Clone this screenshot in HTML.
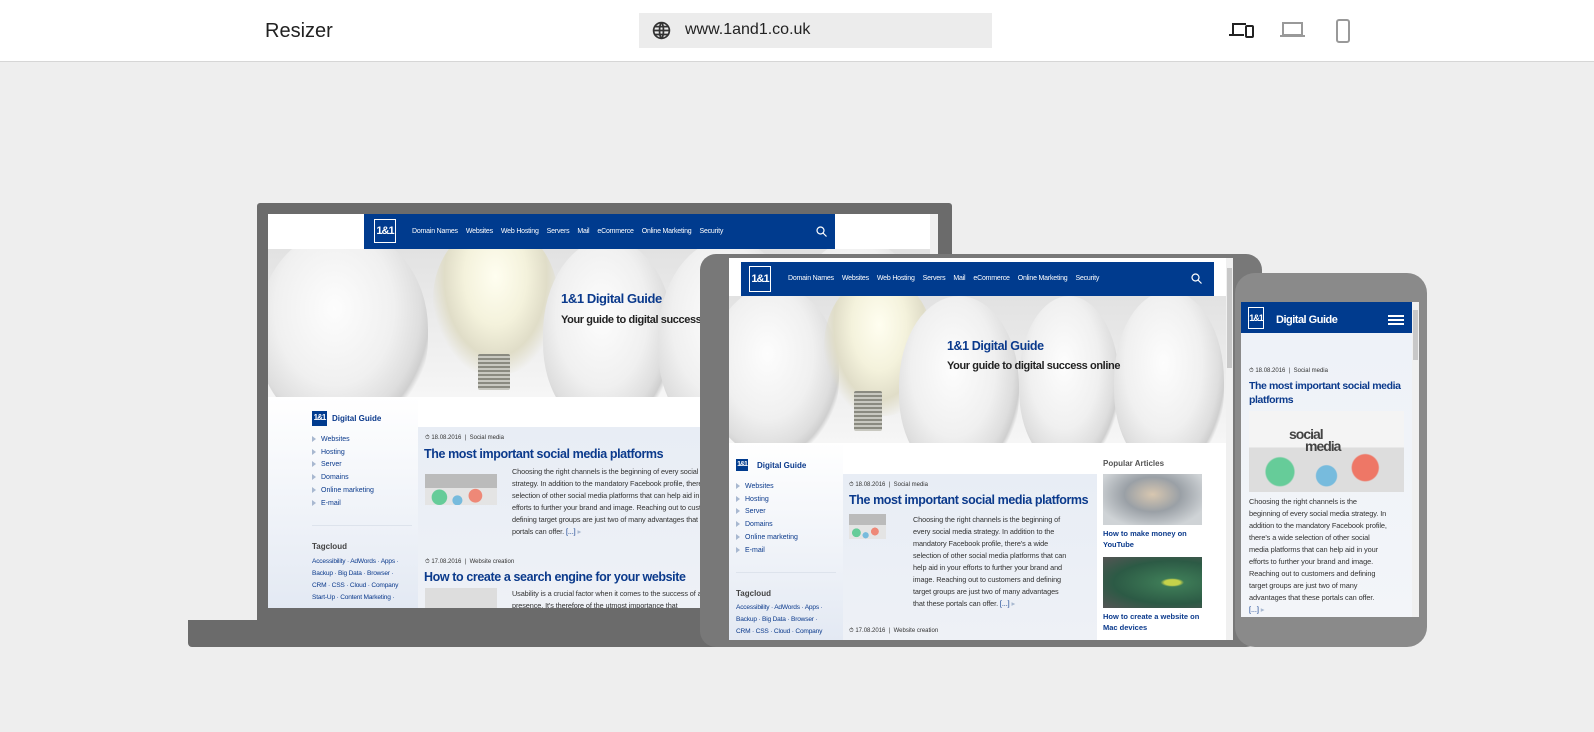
<!DOCTYPE html>
<html><head><meta charset="utf-8">
<style>
*{margin:0;padding:0;box-sizing:border-box}
body{width:1594px;height:732px;background:#eeeeee;font-family:"Liberation Sans",sans-serif;position:relative;overflow:hidden}
.a{position:absolute}
.top{left:0;top:0;width:1594px;height:62px;background:#fff;border-bottom:1px solid #d6d6d6}
.blue{background:#003b8e}
.logo{border:1px solid #fff;color:#fff;font-weight:bold;text-align:center;font-family:"Liberation Sans",sans-serif;letter-spacing:-1px}
.nav{color:#fff;font-size:7px;white-space:nowrap;letter-spacing:-0.2px}
.nav span{margin-right:8px}
.hero{background:linear-gradient(180deg,#e2e2e2 0%,#eeeeee 60%,#f6f6f6 100%);overflow:hidden}
.bulb{position:absolute;border-radius:50% 50% 45% 45%;background:radial-gradient(ellipse at 45% 40%,#fdfdfd 0%,#f0f0f0 45%,#dedede 65%,#cfcfcf 72%,rgba(230,230,230,0) 76%)}
.bulb.lit{background:radial-gradient(ellipse at 50% 35%,#fffef0 0%,#f4f2dc 35%,#e0ddc8 58%,rgba(225,225,225,0) 74%)}
.base{position:absolute;background:repeating-linear-gradient(180deg,#8a8a80 0 2px,#c8c8c0 2px 4px);border-radius:2px}
.h1{color:#0b3a8c;font-weight:bold;white-space:nowrap;letter-spacing:-0.4px}
.sub{color:#222;font-weight:bold;white-space:nowrap;letter-spacing:-0.4px}
.side{background:linear-gradient(180deg,#fff 0%,#e3e9f3 100%)}
.li{font-size:7px;color:#0b3a8c;white-space:nowrap}
.li:before{content:"";display:inline-block;border-left:4px solid #a8b8d0;border-top:3px solid transparent;border-bottom:3px solid transparent;margin-right:5px;vertical-align:-1px}
.meta{font-size:6px;color:#333;white-space:nowrap}
.txt{font-size:7.3px;color:#333;line-height:12px;letter-spacing:-0.1px}
.tag{font-size:6.6px;color:#0b3a8c;line-height:12px;white-space:nowrap;letter-spacing:-0.2px}
.thumb{background:radial-gradient(circle at 20% 75%,#6c9 0 12%,transparent 13%),radial-gradient(circle at 70% 70%,#e87 0 12%,transparent 13%),radial-gradient(circle at 45% 85%,#7bd 0 10%,transparent 11%),linear-gradient(180deg,#bbb 0 45%,#e4e4e4 45%)}
.mini{font-size:8px;color:#0b3a8c;font-weight:bold}
</style></head><body>
<div class="a top"></div>
<div class="a" style="left:265px;top:20px;font-size:20px;color:#222">Resizer</div>
<div class="a" style="left:639px;top:13px;width:353px;height:35px;background:#ececec"></div>
<svg class="a" style="left:651px;top:20px" width="21" height="21" viewBox="0 0 24 24" fill="none" stroke="#333" stroke-width="2"><circle cx="12" cy="12" r="9"/><path d="M3 12h18M12 3c-3 3-3 15 0 18M12 3c3 3 3 15 0 18M4.5 7.5h15M4.5 16.5h15"/></svg>
<div class="a" style="left:685px;top:21px;font-size:16px;color:#222">www.1and1.co.uk</div>
<svg class="a" style="left:1229px;top:20px" width="26" height="20" viewBox="0 0 26 20"><path d="M3 3h14v2H5v9h10v2H0v-2h3z" fill="#222"/><rect x="17" y="6" width="7" height="11" rx="1" fill="none" stroke="#222" stroke-width="2"/></svg>
<svg class="a" style="left:1280px;top:20px" width="25" height="20" viewBox="0 0 25 20"><rect x="3" y="3" width="19" height="12" fill="none" stroke="#999" stroke-width="2"/><rect x="0" y="15" width="25" height="2" fill="#999"/></svg>
<svg class="a" style="left:1335px;top:19px" width="16" height="24" viewBox="0 0 16 24"><rect x="2" y="1" width="12" height="22" rx="2" fill="none" stroke="#999" stroke-width="2"/></svg>

<!-- LAPTOP -->
<div class="a" style="left:257px;top:203px;width:695px;height:419px;background:#6b6b6b;border-radius:3px 3px 0 0"></div>
<div class="a" style="left:188px;top:620px;width:764px;height:27px;background:#6b6b6b;border-radius:0 0 4px 4px"></div>
<div class="a" style="left:268px;top:214px;width:670px;height:394px;background:#fff;overflow:hidden">
  <div class="a" style="left:662px;top:0;width:8px;height:394px;background:#f0f0f0"></div>
  <div class="a hero" style="left:0;top:35px;width:662px;height:148px">
    <div class="bulb" style="left:-10px;top:-20px;width:170px;height:200px"></div>
    <div class="bulb lit" style="left:165px;top:-25px;width:125px;height:150px"></div>
    <div class="base" style="left:210px;top:105px;width:32px;height:36px"></div>
    <div class="bulb" style="left:275px;top:-10px;width:130px;height:190px"></div>
    <div class="bulb" style="left:390px;top:-10px;width:140px;height:200px"></div>
    <div class="bulb" style="left:520px;top:-10px;width:140px;height:200px"></div>
  </div>
  <div class="a blue" style="left:96px;top:0;width:471px;height:35px"></div>
  <div class="a logo" style="left:106px;top:5px;width:22px;height:24px;font-size:11px;line-height:22px">1&amp;1</div>
  <div class="a nav" style="left:144px;top:14px"><span>Domain Names</span><span>Websites</span><span>Web Hosting</span><span>Servers</span><span>Mail</span><span>eCommerce</span><span>Online Marketing</span><span>Security</span></div>
  <svg class="a" style="left:548px;top:12px" width="11" height="11" viewBox="0 0 11 11" fill="none" stroke="#fff" stroke-width="1.2"><circle cx="4.5" cy="4.5" r="3.5"/><path d="M7 7l3.5 3.5"/></svg>
  <div class="a h1" style="left:293px;top:77px;font-size:13px">1&amp;1 Digital Guide</div>
  <div class="a sub" style="left:293px;top:100px;font-size:11px">Your guide to digital success online</div>
  <div class="a side" style="left:0;top:183px;width:150px;height:211px"></div>
  <div class="a blue logo" style="left:44px;top:197px;width:15px;height:15px;font-size:8px;line-height:14px;border:none">1&amp;1</div>
  <div class="a mini" style="left:64px;top:200px">Digital Guide</div>
  <div class="a li" style="left:44px;top:222px">Websites</div>
  <div class="a li" style="left:44px;top:235px">Hosting</div>
  <div class="a li" style="left:44px;top:247px">Server</div>
  <div class="a li" style="left:44px;top:260px">Domains</div>
  <div class="a li" style="left:44px;top:273px">Online marketing</div>
  <div class="a li" style="left:44px;top:286px">E-mail</div>
  <div class="a" style="left:44px;top:311px;width:100px;height:1px;background:#dde3ec"></div>
  <div class="a" style="left:44px;top:328px;font-size:8px;color:#444;font-weight:bold">Tagcloud</div>
  <div class="a tag" style="left:44px;top:342px">Accessibility · AdWords · Apps ·<br>Backup · Big Data · Browser ·<br>CRM · CSS · Cloud · Company<br>Start-Up · Content Marketing ·</div>
  <div class="a" style="left:150px;top:213px;width:512px;height:181px;background:linear-gradient(180deg,#e8edf5,#eef1f6)"></div>
  <div class="a meta" style="left:157px;top:221px">⏱ 18.08.2016 &nbsp;|&nbsp; Social media</div>
  <div class="a h1" style="left:156px;top:233px;font-size:12.5px">The most important social media platforms</div>
  <div class="a thumb" style="left:157px;top:260px;width:72px;height:31px"></div>
  <div class="a txt" style="left:244px;top:252px;width:260px;white-space:nowrap">Choosing the right channels is the beginning of every social media<br>strategy. In addition to the mandatory Facebook profile, there's a wide<br>selection of other social media platforms that can help aid in your<br>efforts to further your brand and image. Reaching out to customers and<br>defining target groups are just two of many advantages that these<br>portals can offer. <span style="color:#0b3a8c">[...]</span> <span style="color:#a8b8d0">▸</span></div>
  <div class="a meta" style="left:157px;top:345px">⏱ 17.08.2016 &nbsp;|&nbsp; Website creation</div>
  <div class="a h1" style="left:156px;top:356px;font-size:12.5px">How to create a search engine for your website</div>
  <div class="a" style="left:157px;top:374px;width:72px;height:20px;background:#ddd"></div>
  <div class="a txt" style="left:244px;top:374px;white-space:nowrap">Usability is a crucial factor when it comes to the success of a web<br>presence. It's therefore of the utmost importance that</div>
</div>

<!-- TABLET -->
<div class="a" style="left:700px;top:254px;width:562px;height:393px;background:#787878;border-radius:16px"></div>
<div class="a" style="left:729px;top:258px;width:504px;height:382px;background:#fff;overflow:hidden">
  <div class="a" style="left:497px;top:0;width:7px;height:382px;background:#f0f0f0"></div>
  <div class="a" style="left:498px;top:10px;width:5px;height:100px;background:#c8c8c8"></div>
  <div class="a hero" style="left:0;top:38px;width:497px;height:147px">
    <div class="bulb" style="left:-20px;top:-10px;width:130px;height:170px"></div>
    <div class="bulb lit" style="left:95px;top:-20px;width:110px;height:140px"></div>
    <div class="base" style="left:125px;top:95px;width:28px;height:40px"></div>
    <div class="bulb" style="left:170px;top:0;width:120px;height:180px"></div>
    <div class="bulb" style="left:290px;top:0;width:100px;height:170px"></div>
    <div class="bulb" style="left:385px;top:-5px;width:110px;height:180px"></div>
  </div>
  <div class="a blue" style="left:12px;top:4px;width:473px;height:34px"></div>
  <div class="a logo" style="left:20px;top:8px;width:22px;height:26px;font-size:11px;line-height:24px">1&amp;1</div>
  <div class="a nav" style="left:59px;top:17px"><span>Domain Names</span><span>Websites</span><span>Web Hosting</span><span>Servers</span><span>Mail</span><span>eCommerce</span><span>Online Marketing</span><span>Security</span></div>
  <svg class="a" style="left:462px;top:15px" width="11" height="11" viewBox="0 0 11 11" fill="none" stroke="#fff" stroke-width="1.2"><circle cx="4.5" cy="4.5" r="3.5"/><path d="M7 7l3.5 3.5"/></svg>
  <div class="a h1" style="left:218px;top:81px;font-size:12.5px">1&amp;1 Digital Guide</div>
  <div class="a sub" style="left:218px;top:102px;font-size:11px">Your guide to digital success online</div>
  <div class="a side" style="left:0;top:185px;width:114px;height:197px"></div>
  <div class="a blue logo" style="left:7px;top:201px;width:12px;height:12px;font-size:7px;line-height:12px;border:none">1&amp;1</div>
  <div class="a mini" style="left:28px;top:203px">Digital Guide</div>
  <div class="a li" style="left:7px;top:225px">Websites</div>
  <div class="a li" style="left:7px;top:238px">Hosting</div>
  <div class="a li" style="left:7px;top:250px">Server</div>
  <div class="a li" style="left:7px;top:263px">Domains</div>
  <div class="a li" style="left:7px;top:276px">Online marketing</div>
  <div class="a li" style="left:7px;top:289px">E-mail</div>
  <div class="a" style="left:7px;top:314px;width:100px;height:1px;background:#dde3ec"></div>
  <div class="a" style="left:7px;top:331px;font-size:8px;color:#444;font-weight:bold">Tagcloud</div>
  <div class="a tag" style="left:7px;top:344px">Accessibility · AdWords · Apps ·<br>Backup · Big Data · Browser ·<br>CRM · CSS · Cloud · Company</div>
  <div class="a" style="left:114px;top:216px;width:254px;height:166px;background:linear-gradient(180deg,#e8edf5,#eef1f6)"></div>
  <div class="a meta" style="left:120px;top:224px">⏱ 18.08.2016 &nbsp;|&nbsp; Social media</div>
  <div class="a h1" style="left:120px;top:235px;font-size:12.5px">The most important social media platforms</div>
  <div class="a thumb" style="left:120px;top:256px;width:37px;height:25px"></div>
  <div class="a txt" style="left:184px;top:256px;white-space:nowrap">Choosing the right channels is the beginning of<br>every social media strategy. In addition to the<br>mandatory Facebook profile, there's a wide<br>selection of other social media platforms that can<br>help aid in your efforts to further your brand and<br>image. Reaching out to customers and defining<br>target groups are just two of many advantages<br>that these portals can offer. <span style="color:#0b3a8c">[...]</span> <span style="color:#a8b8d0">▸</span></div>
  <div class="a meta" style="left:120px;top:370px">⏱ 17.08.2016 &nbsp;|&nbsp; Website creation</div>
  <div class="a" style="left:374px;top:201px;font-size:8px;font-weight:bold;color:#555">Popular Articles</div>
  <div class="a" style="left:374px;top:216px;width:99px;height:51px;background:radial-gradient(ellipse at 50% 40%,#d8c7b0 0%,#9aa0a6 40%,#cfd3d6 80%)"></div>
  <div class="a mini" style="left:374px;top:270px;font-size:7.5px;line-height:11px">How to make money on<br>YouTube</div>
  <div class="a" style="left:374px;top:299px;width:99px;height:51px;background:radial-gradient(ellipse at 70% 50%,#c5d24a 0 8%,#3d7a56 12%,#2c5a45 60%,#555 100%)"></div>
  <div class="a mini" style="left:374px;top:353px;font-size:7.5px;line-height:11px">How to create a website on<br>Mac devices</div>
</div>

<!-- PHONE -->
<div class="a" style="left:1235px;top:273px;width:192px;height:374px;background:#8a8a8a;border-radius:20px"></div>
<div class="a" style="left:1241px;top:302px;width:178px;height:315px;background:#fff;overflow:hidden">
  <div class="a" style="left:171px;top:0;width:7px;height:315px;background:#f0f0f0"></div>
  <div class="a" style="left:172px;top:8px;width:5px;height:50px;background:#c8c8c8"></div>
  <div class="a blue" style="left:0;top:0;width:171px;height:31px"></div>
  <div class="a logo" style="left:7px;top:5px;width:16px;height:22px;font-size:9px;line-height:21px">1&amp;1</div>
  <div class="a" style="left:35px;top:12px;font-size:11px;font-weight:bold;color:#fff;letter-spacing:-0.5px">Digital Guide</div>
  <div class="a" style="left:147px;top:13px;width:16px;height:1.5px;background:#fff;box-shadow:0 4px 0 #fff,0 8px 0 #fff"></div>
  <div class="a" style="left:0;top:31px;width:171px;height:284px;background:linear-gradient(180deg,#eef2f8,#f3f5f9)"></div>
  <div class="a meta" style="left:8px;top:66px">⏱ 18.08.2016 &nbsp;|&nbsp; Social media</div>
  <div class="a h1" style="left:8px;top:77px;font-size:10.5px;line-height:14px;white-space:normal;width:165px">The most important social media platforms</div>
  <div class="a" style="left:8px;top:109px;width:155px;height:81px;background:linear-gradient(180deg,#f4f4f4 0 45%,transparent 45%),radial-gradient(circle at 20% 75%,#6c9 0 10%,transparent 11%),radial-gradient(circle at 75% 70%,#e76 0 10%,transparent 11%),radial-gradient(circle at 50% 80%,#7bd 0 10%,transparent 11%),#ddd"></div>
  <div class="a" style="left:48px;top:124px;font-size:14px;font-weight:bold;color:#444;letter-spacing:-1px">social</div>
  <div class="a" style="left:64px;top:136px;font-size:14px;font-weight:bold;color:#444;letter-spacing:-1px">media</div>
  <div class="a txt" style="left:8px;top:194px;white-space:nowrap;font-size:7.4px">Choosing the right channels is the<br>beginning of every social media strategy. In<br>addition to the mandatory Facebook profile,<br>there's a wide selection of other social<br>media platforms that can help aid in your<br>efforts to further your brand and image.<br>Reaching out to customers and defining<br>target groups are just two of many<br>advantages that these portals can offer.<br><span style="color:#0b3a8c">[...]</span> <span style="color:#a8b8d0">▸</span></div>
</div>
</body></html>
